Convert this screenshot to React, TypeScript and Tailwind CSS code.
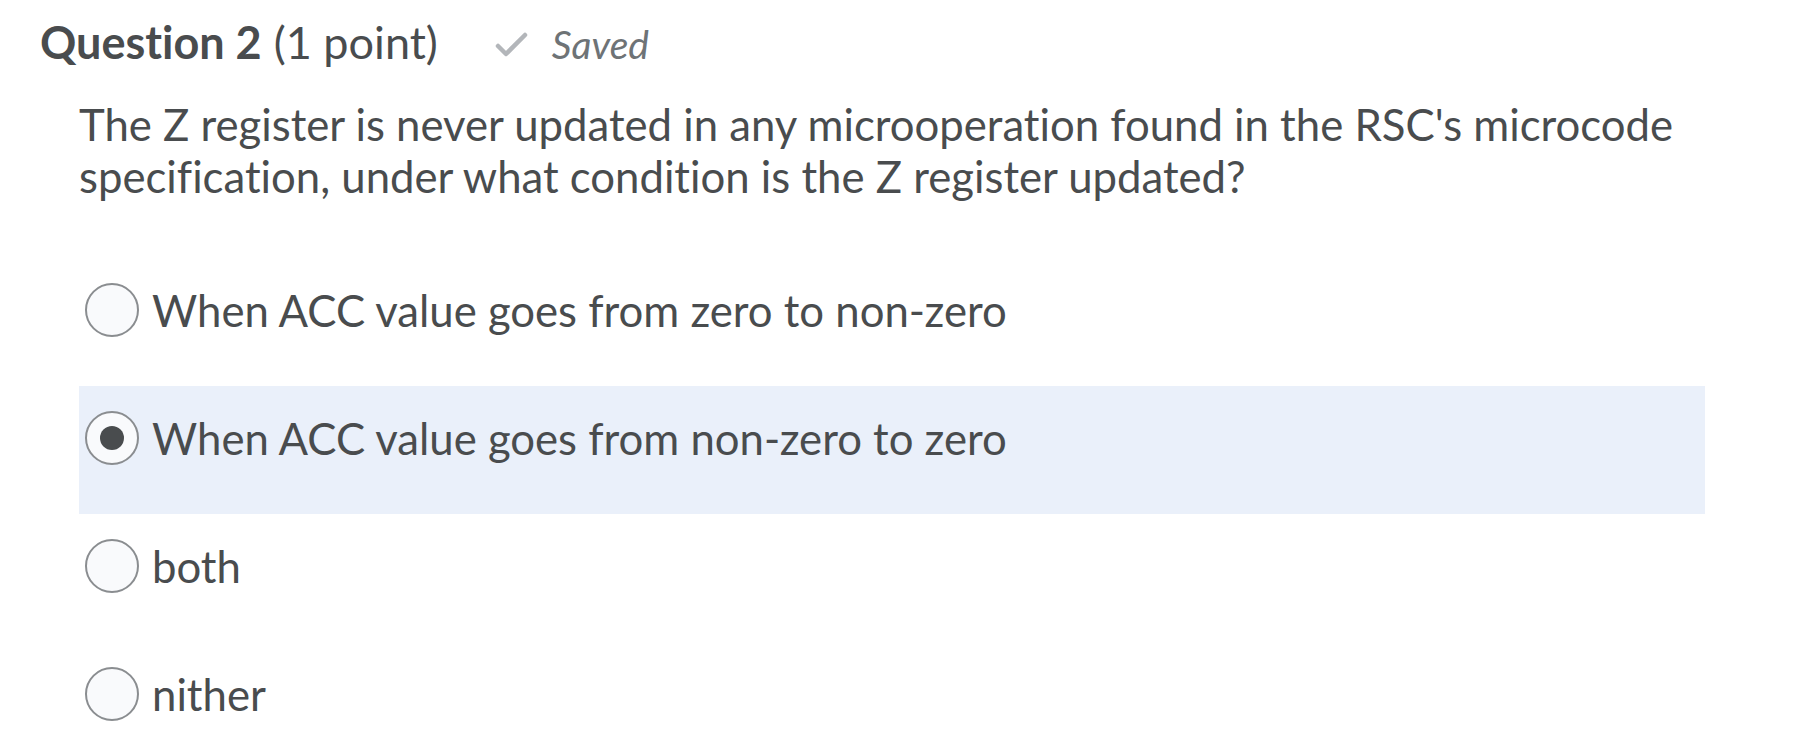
import { useState } from 'react'

const options = [
  'When ACC value goes from zero to non-zero',
  'When ACC value goes from non-zero to zero',
  'both',
  'nither',
]

function Radio({ checked }: { checked: boolean }) {
  return (
    <span className="flex h-[54px] w-[54px] shrink-0 items-center justify-center rounded-full border-2 border-[#8a8d90] bg-[#f9fafc]">
      {checked && <span className="h-[24px] w-[24px] rounded-full bg-[#494c4e]" />}
    </span>
  )
}

export default function App() {
  const [selected, setSelected] = useState(1)

  return (
    <div className="h-[756px] w-[1812px] overflow-hidden bg-white font-['Lato','Liberation_Sans',sans-serif] text-[#494c4e] [font-variant-ligatures:none]">
      {/* Header */}
      <div className="flex items-baseline pl-[40px] pt-[12px] text-[45px] leading-[60px]">
        <h2 className="font-bold">Question 2</h2>
        <span className="ml-[12px]">(1 point)</span>
        <span className="ml-[57px] flex items-baseline text-[#6e7376]">
          <svg viewBox="0 0 33 25" className="mr-[24px] h-[25px] w-[33px] self-center text-[#b3b6ba]" fill="none" stroke="currentColor" strokeWidth="4.5" strokeLinecap="round" strokeLinejoin="round">
            <path d="M3 14l8 8L30 3" />
          </svg>
          <span className="text-[39px] italic">Saved</span>
        </span>
      </div>

      {/* Question text */}
      <p className="mt-[24px] w-[1720px] pl-[79px] text-[43.7px] leading-[52px]">
        The Z register is never updated in any microoperation found in the RSC's microcode specification, under what condition is the Z register updated?
      </p>

      {/* Options */}
      <div className="mt-[56px] ml-[79px] w-[1626px]">
        {options.map((opt, i) => (
          <label
            key={opt}
            onClick={() => setSelected(i)}
            className={`flex h-[128px] items-start pl-[6px] pt-[25px] ${selected === i ? 'bg-[#eaf0fa]' : ''}`}
          >
            <div className="flex h-[54px] items-center gap-[13px]">
              <Radio checked={selected === i} />
              <span className="text-[43.7px] leading-[54px]">{opt}</span>
            </div>
          </label>
        ))}
      </div>
    </div>
  )
}
